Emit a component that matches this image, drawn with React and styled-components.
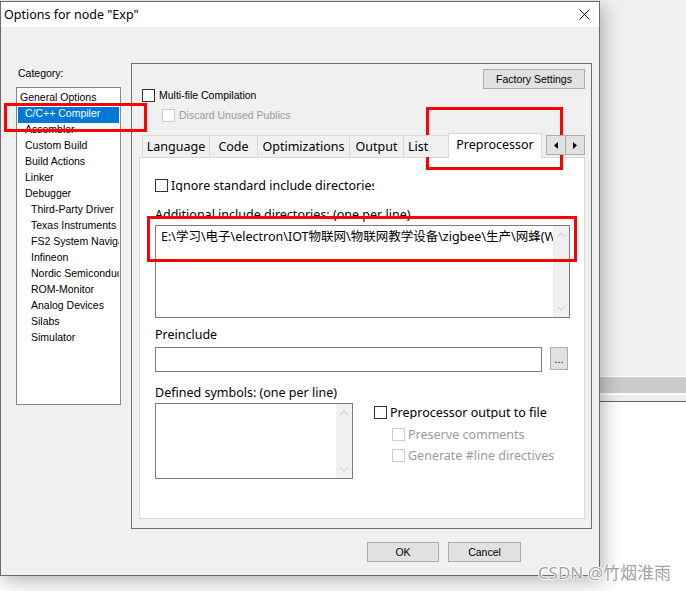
import React from 'react';
import styled, { createGlobalStyle } from 'styled-components';

const Global = createGlobalStyle`
  html, body { margin: 0; padding: 0; }
  body {
    width: 686px; height: 591px; overflow: hidden; background: #fff;
    font-family: "Noto Sans", "Noto Sans CJK SC", sans-serif;
  }
`;

const CLASSIC = `"Liberation Sans", Arial, sans-serif`;
const MODERN = `"Noto Sans", "Noto Sans CJK SC", sans-serif`;

const Desktop = styled.div`
  position: relative;
  width: 686px;
  height: 591px;
  overflow: hidden;
`;

const Backdrop = styled.div`
  display: flex;
  flex-direction: column;
  height: 100%;
`;
const BackTop = styled.div`height: 376px; background: #f0f0f0;`;
const BackBand = styled.div`height: 16px; background: #cccccc; border-top: 1px solid #fff;`;
const BackGap = styled.div`height: 2px; background: #fff;`;
const BackStrip = styled.div`height: 6px; background: #f0f0f0; border-bottom: 1px solid #646464;`;
const BackRest = styled.div`flex: 1; background: #fff;`;

const Window = styled.div`
  position: absolute;
  left: 0;
  top: 1px;
  width: 600px;
  height: 575px;
  box-sizing: border-box;
  border: 1px solid #6c6c6c;
  background: #f0f0f0;
  box-shadow: 3px 5px 18px rgba(0, 0, 0, 0.3);
  display: flex;
  flex-direction: column;
`;

const TitleBar = styled.div`
  height: 25px;
  flex: none;
  background: #fff;
  display: flex;
  align-items: center;
  justify-content: space-between;
  padding: 0 9px 1px 3px;
  box-sizing: border-box;
`;
const Title = styled.span`
  font: 12.5px ${MODERN};
  color: #000;
`;

const Body = styled.div`
  flex: 1;
  display: flex;
  flex-direction: column;
  padding: 36px 7px 0 15px;
`;

const MainRow = styled.div`
  display: flex;
  gap: 10px;
  height: 466px;
`;

const CategoryColumn = styled.div`
  width: 105px;
  display: flex;
  flex-direction: column;
  padding-top: 3px;
`;
const CategoryLabel = styled.div`
  font: 10.5px ${CLASSIC};
  line-height: 14px;
  padding-left: 2px;
  color: #000;
`;
const CategoryList = styled.div`
  margin-top: 7px;
  height: 318px;
  box-sizing: border-box;
  border: 1px solid #828790;
  background: #fff;
  padding-top: 3px;
  overflow: hidden;
`;
const CategoryItem = styled.div`
  height: 16px;
  line-height: 16px;
  margin: 0 1px;
  padding-left: ${p => [2, 7, 13][p.$level]}px;
  font: 10.5px ${CLASSIC};
  color: ${p => (p.$selected ? '#fff' : '#000')};
  background: ${p => (p.$selected ? '#0078d7' : 'transparent')};
  white-space: nowrap;
  overflow: hidden;
`;

const OptionsPanel = styled.div`
  width: 461px;
  box-sizing: border-box;
  border: 1px solid #6e6e6e;
  padding: 5px 6px 9px 7px;
  display: flex;
  flex-direction: column;
`;

const PanelTop = styled.div`
  display: flex;
  justify-content: flex-end;
`;

const ClassicButton = styled.div`
  width: ${p => p.$w}px;
  height: ${p => p.$h || 20}px;
  box-sizing: border-box;
  border: 1px solid #adadad;
  background: #e1e1e1;
  display: flex;
  align-items: center;
  justify-content: center;
  font: 10.5px ${CLASSIC};
  color: #000;
`;

const CheckRow = styled.div`
  display: flex;
  align-items: center;
  height: 13px;
  gap: ${p => p.$gap ?? 4}px;
  margin-left: ${p => p.$indent || 0}px;
  margin-top: ${p => p.$top || 0}px;
  width: ${p => (p.$w ? `${p.$w}px` : 'auto')};
  overflow: hidden;
  white-space: nowrap;
`;
const Box = styled.span`
  flex: none;
  width: 13px;
  height: 13px;
  box-sizing: border-box;
  border: 1px solid ${p => (p.$disabled ? '#cccccc' : '#333333')};
  background: #fff;
`;
const CheckText = styled.span`
  font: ${p => (p.$modern ? `12.5px ${MODERN}` : `10.5px ${CLASSIC}`)};
  line-height: 13px;
  color: ${p => (p.$disabled ? '#9a9a9a' : '#000')};
`;

const TabHeader = styled.div`
  display: flex;
  height: 25px;
  margin-top: 11px;
  margin-bottom: -1px;
  position: relative;
  z-index: 1;
`;
const TabStrip = styled.div`
  flex: 1;
  display: flex;
  align-items: flex-end;
  padding-left: 3px;
`;
const Tab = styled.div`
  box-sizing: border-box;
  width: ${p => p.$w}px;
  height: ${p => (p.$active ? 25 : 22)}px;
  margin-left: ${p => (p.$first ? 0 : -1)}px;
  margin-bottom: ${p => (p.$active ? 0 : 1)}px;
  padding-bottom: ${p => (p.$active ? 3 : 0)}px;
  padding-left: ${p => (p.$start ? 4 : 0)}px;
  border: 1px solid #d9d9d9;
  border-bottom: none;
  background: ${p => (p.$active ? '#fff' : '#f0f0f0')};
  display: flex;
  align-items: center;
  justify-content: ${p => (p.$start ? 'flex-start' : 'center')};
  font: 12.5px ${MODERN};
  color: #000;
  white-space: nowrap;
  overflow: hidden;
  position: relative;
  z-index: ${p => (p.$active ? 1 : 0)};
`;
const ArrowPair = styled.div`
  display: flex;
  margin-top: 2px;
`;
const ArrowButton = styled.div`
  width: 20px;
  height: 20px;
  box-sizing: border-box;
  border: 1px solid #adadad;
  background: #e1e1e1;
  margin-left: ${p => (p.$second ? -1 : 0)}px;
  display: flex;
  align-items: center;
  justify-content: center;
`;

const TabPage = styled.div`
  flex: 1;
  border: 1px solid #d9d9d9;
  background: #fff;
  padding: 21px 14px 0 15px;
  display: flex;
  flex-direction: column;
`;

const FieldLabel = styled.div`
  font: 12.5px ${MODERN};
  line-height: 14px;
  color: #000;
  margin-top: ${p => p.$top || 0}px;
  white-space: nowrap;
`;

const TextBox = styled.div`
  width: ${p => p.$w}px;
  height: ${p => p.$h}px;
  margin-top: ${p => p.$top || 0}px;
  box-sizing: border-box;
  border: 1px solid #7a7a7a;
  background: #fff;
  display: flex;
  flex: none;
`;
const TextContent = styled.div`
  flex: 1;
  min-width: 0;
  overflow: hidden;
  white-space: nowrap;
  padding: 3px 0 0 5px;
  font: 12.5px ${MODERN};
  line-height: 16px;
  color: #000;
`;
const VScroll = styled.div`
  width: 16px;
  flex: none;
  background: #f0f0f0;
  display: flex;
  flex-direction: column;
  justify-content: space-between;
`;
const ScrollArrow = styled.div`
  height: 17px;
  display: flex;
  align-items: center;
  justify-content: center;
`;

const InputRow = styled.div`
  display: flex;
  align-items: flex-start;
  gap: 8px;
  margin-top: 5px;
`;

const BottomRow = styled.div`
  display: flex;
  gap: 21px;
  margin-top: 3px;
`;
const OutputOptions = styled.div`
  display: flex;
  flex-direction: column;
  padding-top: 3px;
`;

const ButtonRow = styled.div`
  display: flex;
  justify-content: flex-end;
  gap: 9px;
  margin-top: 13px;
  margin-right: 71px;
`;

const Annotation = styled.div`
  position: absolute;
  left: ${p => p.$x}px;
  top: ${p => p.$y}px;
  width: ${p => p.$w}px;
  height: ${p => p.$h}px;
  box-sizing: border-box;
  border: 3px solid #ff0000;
  pointer-events: none;
`;

const Watermark = styled.div`
  position: absolute;
  right: 15px;
  bottom: 7px;
  font: 17px "Noto Sans", "Noto Sans CJK SC", sans-serif;
  color: rgba(150, 150, 150, 0.9);
  text-shadow: -1px 0 #fff, 1px 0 #fff, 0 -1px #fff, 0 1px #fff;
  white-space: nowrap;
`;

const categories = [
  { label: 'General Options', level: 0 },
  { label: 'C/C++ Compiler', level: 1, selected: true },
  { label: 'Assembler', level: 1 },
  { label: 'Custom Build', level: 1 },
  { label: 'Build Actions', level: 1 },
  { label: 'Linker', level: 1 },
  { label: 'Debugger', level: 1 },
  { label: 'Third-Party Driver', level: 2 },
  { label: 'Texas Instruments', level: 2 },
  { label: 'FS2 System Navigator', level: 2 },
  { label: 'Infineon', level: 2 },
  { label: 'Nordic Semiconductor', level: 2 },
  { label: 'ROM-Monitor', level: 2 },
  { label: 'Analog Devices', level: 2 },
  { label: 'Silabs', level: 2 },
  { label: 'Simulator', level: 2 },
];

const tabs = [
  { label: 'Language', w: 68 },
  { label: 'Code', w: 49 },
  { label: 'Optimizations', w: 93 },
  { label: 'Output', w: 55 },
  { label: 'List', w: 46, start: true },
  { label: 'Preprocessor', w: 94, active: true },
];

const CloseIcon = () => (
  <svg width="11" height="11" viewBox="0 0 11 11">
    <path d="M0.5 0.5 L10.5 10.5 M10.5 0.5 L0.5 10.5" stroke="#111" strokeWidth="1" fill="none" />
  </svg>
);

const Triangle = ({ dir }) => (
  <svg width="4" height="7" viewBox="0 0 4 7">
    {dir === 'left' ? <path d="M4 0 L0 3.5 L4 7 Z" fill="#000" /> : <path d="M0 0 L4 3.5 L0 7 Z" fill="#000" />}
  </svg>
);

const Chevron = ({ dir }) => (
  <svg width="8" height="5" viewBox="0 0 8 5">
    <path
      d={dir === 'up' ? 'M0.5 4.5 L4 1 L7.5 4.5' : 'M0.5 0.5 L4 4 L7.5 0.5'}
      stroke="#c2c2c2"
      strokeWidth="1"
      fill="none"
    />
  </svg>
);

const ScrollBar = () => (
  <VScroll>
    <ScrollArrow><Chevron dir="up" /></ScrollArrow>
    <ScrollArrow><Chevron dir="down" /></ScrollArrow>
  </VScroll>
);

export default function App() {
  return (
    <>
      <Global />
      <Desktop>
        <Backdrop>
          <BackTop />
          <BackBand />
          <BackGap />
          <BackStrip />
          <BackRest />
        </Backdrop>
        <Window>
          <TitleBar>
            <Title>Options for node "Exp"</Title>
            <CloseIcon />
          </TitleBar>
          <Body>
            <MainRow>
              <CategoryColumn>
                <CategoryLabel>Category:</CategoryLabel>
                <CategoryList>
                  {categories.map(c => (
                    <CategoryItem key={c.label} $level={c.level} $selected={c.selected}>
                      {c.label}
                    </CategoryItem>
                  ))}
                </CategoryList>
              </CategoryColumn>
              <OptionsPanel>
                <PanelTop>
                  <ClassicButton $w={102}>Factory Settings</ClassicButton>
                </PanelTop>
                <CheckRow $indent={3}>
                  <Box />
                  <CheckText>Multi-file Compilation</CheckText>
                </CheckRow>
                <CheckRow $indent={23} $top={7}>
                  <Box $disabled />
                  <CheckText $disabled>Discard Unused Publics</CheckText>
                </CheckRow>
                <TabHeader>
                  <TabStrip>
                    {tabs.map((t, i) => (
                      <Tab key={t.label} $w={t.w} $active={t.active} $start={t.start} $first={i === 0}>
                        {t.label}
                      </Tab>
                    ))}
                  </TabStrip>
                  <ArrowPair>
                    <ArrowButton><Triangle dir="left" /></ArrowButton>
                    <ArrowButton $second><Triangle dir="right" /></ArrowButton>
                  </ArrowPair>
                </TabHeader>
                <TabPage>
                  <CheckRow $w={219} $gap={3}>
                    <Box />
                    <CheckText $modern>Ignore standard include directories</CheckText>
                  </CheckRow>
                  <FieldLabel $top={16}>Additional include directories: (one per line)</FieldLabel>
                  <TextBox $w={415} $h={93} $top={3}>
                    <TextContent>E:\学习\电子\electron\IOT物联网\物联网教学设备\zigbee\生产\网蜂(WeBee)</TextContent>
                    <ScrollBar />
                  </TextBox>
                  <FieldLabel $top={10}>Preinclude</FieldLabel>
                  <InputRow>
                    <TextBox $w={387} $h={25} />
                    <ClassicButton $w={18} $h={23}>...</ClassicButton>
                  </InputRow>
                  <FieldLabel $top={14}>Defined symbols: (one per line)</FieldLabel>
                  <BottomRow>
                    <TextBox $w={198} $h={76}>
                      <TextContent />
                      <ScrollBar />
                    </TextBox>
                    <OutputOptions>
                      <CheckRow $gap={3}>
                        <Box />
                        <CheckText $modern>Preprocessor output to file</CheckText>
                      </CheckRow>
                      <CheckRow $indent={18} $top={9} $gap={3}>
                        <Box $disabled />
                        <CheckText $modern $disabled>Preserve comments</CheckText>
                      </CheckRow>
                      <CheckRow $indent={18} $top={8} $gap={3}>
                        <Box $disabled />
                        <CheckText $modern $disabled>Generate #line directives</CheckText>
                      </CheckRow>
                    </OutputOptions>
                  </BottomRow>
                </TabPage>
              </OptionsPanel>
            </MainRow>
            <ButtonRow>
              <ClassicButton $w={72}>OK</ClassicButton>
              <ClassicButton $w={73}>Cancel</ClassicButton>
            </ButtonRow>
          </Body>
        </Window>
        <Annotation $x={4} $y={103} $w={143} $h={29} />
        <Annotation $x={426} $y={107} $w={137} $h={63} />
        <Annotation $x={147} $y={216} $w={430} $h={46} />
        <Watermark>CSDN @竹烟淮雨</Watermark>
      </Desktop>
    </>
  );
}
